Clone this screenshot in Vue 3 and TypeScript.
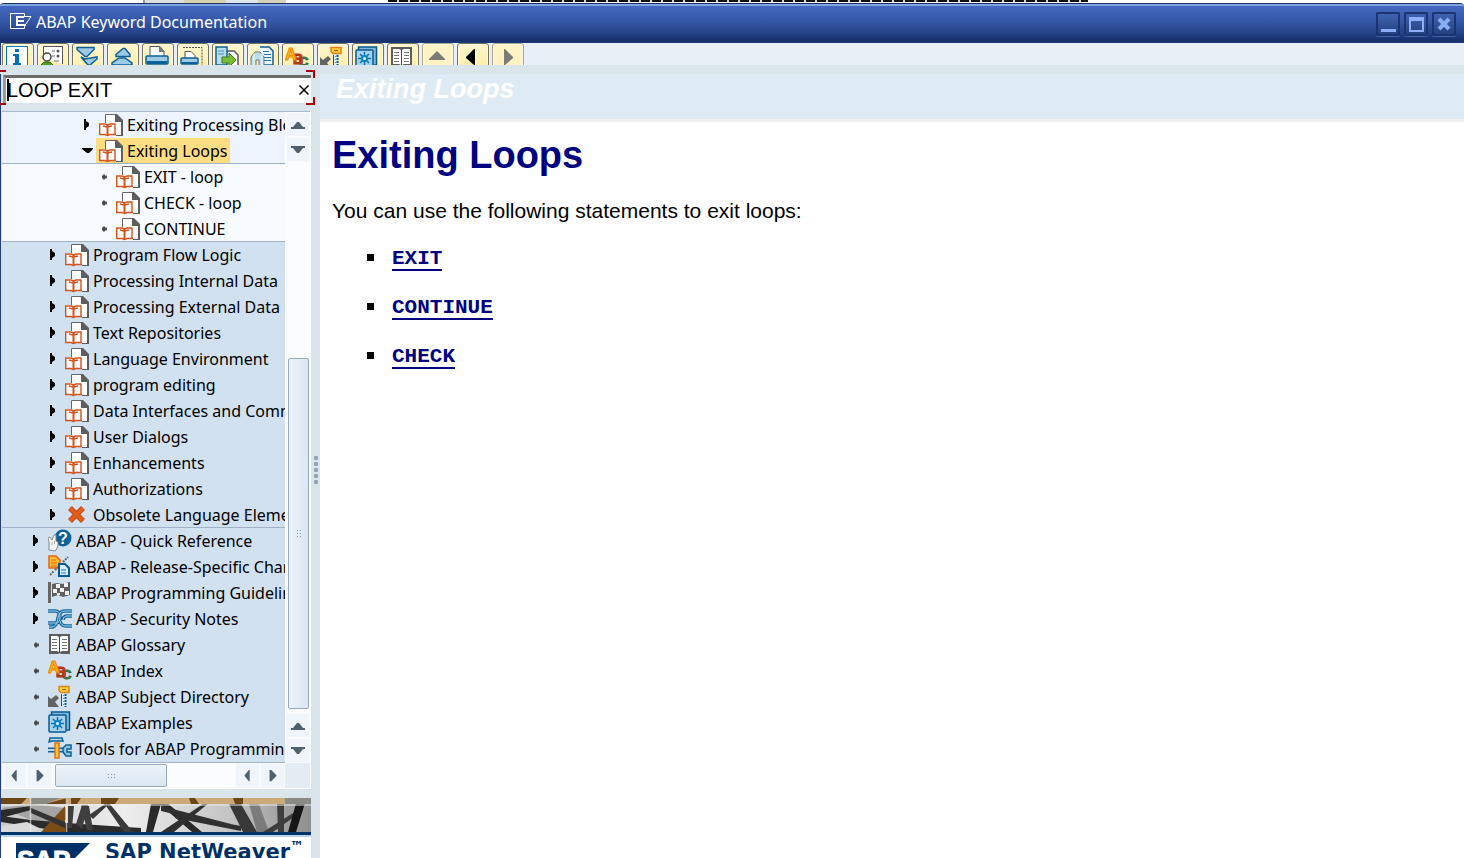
<script setup lang="ts">
import { ref } from 'vue'

interface TreeNode {
  label: string
  icon: string
  level: number
  state: 'closed' | 'open' | 'leaf'
  tone?: 'pale' | 'light'
  ruled?: boolean
  selected?: boolean
}

interface Tool {
  name: string
  icon: string
  disabled?: boolean
}

const query = ref('LOOP EXIT')

const tools: Tool[] = [
  { name: 'Information', icon: 'info' },
  { name: 'Author', icon: 'person' },
  { name: 'Expand', icon: 'expand' },
  { name: 'Collapse', icon: 'collapse' },
  { name: 'Print', icon: 'print' },
  { name: 'Print selection', icon: 'print-sel' },
  { name: 'Export', icon: 'export' },
  { name: 'Find in documents', icon: 'find' },
  { name: 'ABAP Index', icon: 'abc' },
  { name: 'Subject Directory', icon: 'key' },
  { name: 'Examples', icon: 'gear' },
  { name: 'Glossary', icon: 'book' },
  { name: 'Up', icon: 'up', disabled: true },
  { name: 'Back', icon: 'back' },
  { name: 'Forward', icon: 'forward', disabled: true },
]

const nodes: TreeNode[] = [
  { label: 'Exiting Processing Blocks', icon: 'doc', level: 3, state: 'closed', tone: 'light' },
  { label: 'Exiting Loops', icon: 'doc', level: 3, state: 'open', tone: 'light', ruled: true, selected: true },
  { label: 'EXIT - loop', icon: 'doc', level: 4, state: 'leaf', tone: 'pale' },
  { label: 'CHECK - loop', icon: 'doc', level: 4, state: 'leaf', tone: 'pale' },
  { label: 'CONTINUE', icon: 'doc', level: 4, state: 'leaf', tone: 'pale', ruled: true },
  { label: 'Program Flow Logic', icon: 'doc', level: 1, state: 'closed' },
  { label: 'Processing Internal Data', icon: 'doc', level: 1, state: 'closed' },
  { label: 'Processing External Data', icon: 'doc', level: 1, state: 'closed' },
  { label: 'Text Repositories', icon: 'doc', level: 1, state: 'closed' },
  { label: 'Language Environment', icon: 'doc', level: 1, state: 'closed' },
  { label: 'program editing', icon: 'doc', level: 1, state: 'closed' },
  { label: 'Data Interfaces and Communication', icon: 'doc', level: 1, state: 'closed' },
  { label: 'User Dialogs', icon: 'doc', level: 1, state: 'closed' },
  { label: 'Enhancements', icon: 'doc', level: 1, state: 'closed' },
  { label: 'Authorizations', icon: 'doc', level: 1, state: 'closed' },
  { label: 'Obsolete Language Elements', icon: 'cross', level: 1, state: 'closed', ruled: true },
  { label: 'ABAP - Quick Reference', icon: 'help', level: 0, state: 'closed' },
  { label: 'ABAP - Release-Specific Changes', icon: 'release', level: 0, state: 'closed' },
  { label: 'ABAP Programming Guidelines', icon: 'flag', level: 0, state: 'closed' },
  { label: 'ABAP - Security Notes', icon: 'chain', level: 0, state: 'closed' },
  { label: 'ABAP Glossary', icon: 'book', level: 0, state: 'leaf' },
  { label: 'ABAP Index', icon: 'abc', level: 0, state: 'leaf' },
  { label: 'ABAP Subject Directory', icon: 'key', level: 0, state: 'leaf' },
  { label: 'ABAP Examples', icon: 'gear', level: 0, state: 'leaf' },
  { label: 'Tools for ABAP Programming', icon: 'tools', level: 0, state: 'leaf' },
]

const links: string[] = ['EXIT', 'CONTINUE', 'CHECK']
</script>

<template>
  <div class="desktop">
    <svg class="sprite" width="0" height="0" aria-hidden="true">
      <symbol id="i-doc" viewBox="0 0 24 24">
        <path d="M6 1h11l6 7v14H6z" fill="#fff" />
        <path d="M6.500 10V1.500H16" fill="none" stroke="#666" />
        <path d="M16 1h2l6 6v16h-7v-1h5V9h-6z" fill="#5e5e5e" />
        <path d="M0 10h16v12H0z" fill="#fff" />
        <path d="M.7 21V11h5.300l2.500 1 2.500-1h5v10M0 21.500h6l2.500 1 2.500-1h6" fill="none" stroke="#d4531a" stroke-width="1.400" />
        <path d="M8.500 11.500v10.500" stroke="#d4531a" stroke-width="2" />
        <path d="M4 13l4 1 5-1" fill="none" stroke="#d4531a" stroke-width="1.400" />
      </symbol>
      <symbol id="i-cross" viewBox="0 0 24 24">
        <path d="M5 5l13 13M18 5L5 18" stroke="#c8440f" stroke-width="5.500" />
        <path d="M5 5l13 13M18 5L5 18" stroke="#e35d1b" stroke-width="3.500" />
      </symbol>
      <symbol id="i-help" viewBox="0 0 24 24">
        <circle cx="15" cy="9" r="8.500" fill="#0d6197" />
      </symbol>
      <symbol id="i-hand" viewBox="0 0 24 24">
        <path d="M1 21v-8l-1-4 2-1 2 3 2-5 2 0 0 6 2 1v4l-2 4-1 1z" fill="#f4f4f4" stroke="#888" />
        <path d="M4 13v3M6.500 12v3" stroke="#aaa" />
      </symbol>
      <symbol id="i-release" viewBox="0 0 24 24">
        <path d="M1 1h7l4 4v8H1z" fill="#fdbb30" stroke="#e0641c" stroke-width="1.500" />
        <path d="M3 5h5M3 8h6M3 11h6" stroke="#e0641c" />
        <path d="M2 20l4-4M7 15l3-3M15 7l5-5" stroke="#666" stroke-width="2" stroke-dasharray="2 1" />
        <path d="M11 9h6l4 4v8H11z" fill="#d5ebf7" stroke="#075a90" stroke-width="2" />
        <path d="M13 15h5M13 18h5" stroke="#1b76ad" />
      </symbol>
      <symbol id="i-flag" viewBox="0 0 24 24">
        <path d="M0 1h3v21H0z" fill="#666" />
        <path d="M4 3l5-1 5 1 8-2v13l-7 2-5-2-6 2z" fill="#5f5f5f" />
        <path d="M8 3h4v4H8zM16 2h4v4h-4zM5 8h4v4H5zM12 7h4v4h-4zM9 12h3v2H9zM17 10h4v4h-4z" fill="#f2f2f2" />
      </symbol>
      <symbol id="i-chain" viewBox="0 0 24 24">
        <path d="M0 4h7q5 0 5 6t-4 6H0M24 4h-7q-6 0-7 7t-5 9H1M24 19h-6q-5 0-6-5M24 9h-6q-3 1-3 4" fill="none" stroke="#146a9f" stroke-width="3.500" />
        <path d="M0 4h7q5 0 5 6t-4 6H0M24 4h-7q-6 0-7 7t-5 9H1M24 19h-6q-5 0-6-5M24 9h-6q-3 1-3 4" fill="none" stroke="#a6cfe8" />
      </symbol>
      <symbol id="i-book" viewBox="0 0 24 24">
        <path d="M1 1h21v20h-9l-1.500-1L10 21H1z" fill="#5d5d5d" />
        <path d="M3 3h6l2 1v15l-2-1H3zM12 4l2-1h6v15h-6l-2 1z" fill="#fff" />
        <path d="M4 6.500h5M4 9.500h5M4 12.500h5M4 15.500h5M14 6.500h5M14 9.500h5M14 12.500h5M14 15.500h5" stroke="#777" />
        <path d="M11.500 4v16" stroke="#444" />
      </symbol>
      <symbol id="i-key" viewBox="0 0 24 24">
        <path d="M0 11l3 3 5-4 3 3-4 4 4 5H0z" fill="#636363" />
        <path d="M13 8h5v14h-3l-2-2z" fill="#d9eefa" />
        <path d="M13.500 9v12" stroke="#075a90" />
        <path d="M17.500 9v13" stroke="#075a90" stroke-width="2" stroke-dasharray="2 1" />
        <path d="M15.500 10v11" stroke="#4d94bf" stroke-dasharray="1 2" />
        <path d="M11 1.500h10v6h-8l-2-2z" fill="#ffd02f" stroke="#e2801b" stroke-width="1.500" />
        <path d="M14 4.500h4" stroke="#8b5a16" />
      </symbol>
      <symbol id="i-gear" viewBox="0 0 24 24">
        <path d="M3.500 4V1h18v18h-3" fill="#82b8d9" stroke="#075a90" stroke-width="1.500" />
        <rect x="1" y="4" width="17" height="17" rx="1" fill="#a8d2eb" stroke="#075a90" stroke-width="1.500" />
        <path d="M9.500 6v13M3 12.500h13M5 8l9 9M14 8l-9 9" stroke="#0b73b3" stroke-width="1.500" />
        <circle cx="9.500" cy="12.500" r="3.500" fill="#0b82c4" />
        <circle cx="9.500" cy="12.500" r="1.500" fill="#e7f6ff" />
      </symbol>
      <symbol id="i-tools" viewBox="0 0 24 24">
        <path d="M0 13h16" stroke="#0d6299" stroke-width="5" />
        <path d="M0 13h16" stroke="#b4d9ed" stroke-width="2" />
        <path d="M23 8h-5l-3 3v4l3 4h5v-4h-4v-3h4z" fill="#8fc2df" stroke="#0d6299" stroke-width="1.500" />
        <path d="M2 1h12l1 3H4l-3 1z" fill="#b4d9ed" stroke="#0d6299" stroke-width="1.500" />
        <path d="M7 6h4v15H7z" fill="#ffc62a" stroke="#e2701b" stroke-width="1.500" />
      </symbol>
      <symbol id="i-info" viewBox="0 0 24 24">
        <rect x="1.500" y=".5" width="21" height="21" fill="#fff" stroke="#0077bb" />
        <path d="M10 3h4v3h-4zM8 8h6v9h2v2H8v-2h2v-7H8z" fill="#0070b3" />
      </symbol>
      <symbol id="i-person" viewBox="0 0 24 24">
        <path d="M3.500 12V.5h19V18" fill="#fff" stroke="#555" />
        <path d="M12 5h3M12 10h3M14 15h5" stroke="#666" />
        <circle cx="18" cy="5" r="1.500" fill="#555" /><circle cx="18" cy="10" r="1.500" fill="#555" />
        <circle cx="7" cy="11" r="4" fill="#fff" stroke="#444" stroke-width="1.500" />
        <path d="M1 22v-3l3-3h6l3 3v3z" fill="#51a02a" stroke="#38631f" />
      </symbol>
      <symbol id="i-expand" viewBox="0 0 24 24">
        <path d="M2 1.500h17v2l-7 7h-2l-8-7z" fill="#9cc9e4" stroke="#0c6098" stroke-width="1.500" />
        <path d="M6 11l4 2 12-2v2l-7 6h-2z" fill="#9cc9e4" stroke="#0c6098" stroke-width="1.500" />
      </symbol>
      <symbol id="i-collapse" viewBox="0 0 24 24">
        <path d="M6 10.500h14v-2l-5-6h-2l-7 6z" fill="#9cc9e4" stroke="#0c6098" stroke-width="1.500" />
        <path d="M2 19h20v-2l-7-5h-6l-7 5z" fill="#9cc9e4" stroke="#0c6098" stroke-width="1.500" />
      </symbol>
      <symbol id="i-print" viewBox="0 0 24 24">
        <path d="M5 11V.5h10l4 5V11" fill="#fff" stroke="#555" />
        <path d="M14 0v6h6z" fill="#777" />
        <rect x="1" y="10" width="22" height="8" rx="1" fill="#9cc9e4" stroke="#0c6098" stroke-width="1.500" />
        <path d="M2 15h20v3H2z" fill="#0c6098" />
      </symbol>
      <symbol id="i-print-sel" viewBox="0 0 24 24">
        <path d="M3 1.500h19V19" fill="none" stroke="#555" stroke-dasharray="2 1" />
        <path d="M5 12V5.500h6l4 4v3" fill="#fff" stroke="#555" />
        <rect x="1" y="12" width="17" height="6" rx="1" fill="#9cc9e4" stroke="#0c6098" stroke-width="1.500" />
        <path d="M2 16h15v2H2z" fill="#0c6098" />
      </symbol>
      <symbol id="i-export" viewBox="0 0 24 24">
        <path d="M12 5h7l4 4v13h-9" fill="#fff" stroke="#555" stroke-width="1.500" />
        <path d="M1 1h11v18H1z" fill="#b9dcee" stroke="#0c6098" stroke-width="1.500" />
        <path d="M3 5h6M3 8h6" stroke="#4c8fb9" />
        <path d="M7 11h7V7l7 7-7 7v-4H7z" fill="#79bd32" stroke="#3e7b1c" />
      </symbol>
      <symbol id="i-find" viewBox="0 0 24 24">
        <path d="M10 1h9l4 4v14H10" fill="#e9f5fb" stroke="#0c6098" stroke-width="1.500" />
        <path d="M13 5.500h6M14 8.500h7M14 11.500h7M14 14.500h7" stroke="#1d79ae" />
        <path d="M1 20v-9l4-5 5 0 4 5v9H9v-6H6v6z" fill="#b9dcee" stroke="#777" />
        <path d="M4 8v11M12 8v11" stroke="#e9eef1" stroke-width="1.500" />
      </symbol>
      <symbol id="i-up" viewBox="0 0 24 24"><path d="M4 14v-1l8-8 8 8v1z" fill="#7c7b75" /></symbol>
      <symbol id="i-back" viewBox="0 0 24 24"><path d="M15 3v16h-1L6 12v-1l8-8z" fill="#000" /></symbol>
      <symbol id="i-forward" viewBox="0 0 24 24"><path d="M9 3v16h1l8-7v-1l-8-8z" fill="#7c7b75" /></symbol>
    </svg>

    <div class="behind" aria-hidden="true"></div>

    <header class="titlebar">
      <svg class="title-icon" viewBox="0 0 22 18" aria-hidden="true">
        <path d="M14.500 3V.5H.5v15h14V13" fill="none" stroke="#fff" />
        <path d="M14 4H7v8h9M8 8h6" fill="none" stroke="#fff" stroke-width="2" />
        <path d="M12 3.500h9L16 11" fill="none" stroke="#fff" />
      </svg>
      <span class="title">ABAP Keyword Documentation</span>
      <div class="window-buttons">
        <button type="button" aria-label="Minimize">
          <svg viewBox="0 0 24 24"><path d="M5 17h15v3H5z" fill="#8cadf8" /></svg>
        </button>
        <button type="button" aria-label="Maximize">
          <svg viewBox="0 0 24 24"><path d="M5 5h15v15H5zM7 9v9h11V9z" fill="#8cadf8" fill-rule="evenodd" /></svg>
        </button>
        <button type="button" aria-label="Close">
          <svg viewBox="0 0 24 24"><path d="M7 7l10 10M17 7L7 17" stroke="#8cadf8" stroke-width="4" /></svg>
        </button>
      </div>
    </header>

    <nav class="toolbar" aria-label="Tools">
      <button v-for="tool in tools" :key="tool.name" type="button" :aria-label="tool.name" :disabled="tool.disabled">
        <svg v-if="tool.icon === 'abc'" class="icon abc" viewBox="0 0 24 24" aria-hidden="true">
          <text x="14" y="20" class="c">C</text>
          <text x="8" y="18" class="b">B</text>
          <text x="0" y="14" class="a">A</text>
        </svg>
        <svg v-else class="icon"><use :href="'#i-' + tool.icon" /></svg>
      </button>
    </nav>

    <div class="body">
      <aside class="sidebar">
        <div class="search">
          <input v-model="query" type="text" aria-label="Search term" />
          <button class="clear" type="button" aria-label="Clear">
            <svg viewBox="0 0 10 10"><path d="M.5.5l9 9M9.500.5l-9 9" stroke="#000" stroke-width="1.500" /></svg>
          </button>
          <span class="caret"></span>
          <span class="bracket left"></span>
          <span class="bracket top"></span>
          <span class="bracket bottom"></span>
        </div>

        <div class="tree-panel">
          <div class="tree-view">
            <ul class="tree">
              <li v-for="node in nodes" :key="node.label" class="row" :class="[node.tone, { ruled: node.ruled }]" :style="{ paddingLeft: 29 + node.level * 17 + 'px' }">
                <svg class="marker" viewBox="0 0 14 14" aria-hidden="true">
                  <path v-if="node.state === 'closed'" d="M2 1h2v2l3 2v3l-3 2v2H2z" fill="#000" />
                  <path v-else-if="node.state === 'open'" d="M0 4h11v1L7 9H5L0 5z" fill="#000" />
                  <path v-else d="M5 4.500v5M3 7h5" stroke="#222" stroke-width="1.500" />
                  <path v-if="node.state === 'leaf'" d="M3 5h5v4H3z" fill="#555" fill-opacity=".5" />
                </svg>
                <button type="button" class="node" :class="{ selected: node.selected }">
                  <svg v-if="node.icon === 'abc'" class="icon abc" viewBox="0 0 24 24" aria-hidden="true">
                    <text x="14" y="20" class="c">C</text>
                    <text x="8" y="18" class="b">B</text>
                    <text x="0" y="14" class="a">A</text>
                  </svg>
                  <svg v-else-if="node.icon === 'help'" class="icon" viewBox="0 0 24 24" aria-hidden="true">
                    <use href="#i-help" />
                    <text x="15" y="15" class="question">?</text>
                    <use href="#i-hand" />
                  </svg>
                  <svg v-else class="icon"><use :href="'#i-' + node.icon" /></svg>
                  <span>{{ node.label }}</span>
                </button>
              </li>
            </ul>
            <div class="vscroll">
              <button type="button" aria-label="Scroll up"><svg viewBox="0 0 14 8"><path d="M0 8V6h2l4-5h2l4 5h2v2z" fill="#50606e" /></svg></button>
              <button type="button" aria-label="Scroll down"><svg viewBox="0 0 14 8"><path d="M0 0v2h2l4 5h2l4-5h2V0z" fill="#50606e" /></svg></button>
              <div class="vtrack"><div class="vthumb"><i class="grip"></i></div></div>
              <button type="button" aria-label="Page up"><svg viewBox="0 0 14 8"><path d="M0 8V6h2l4-5h2l4 5h2v2z" fill="#50606e" /></svg></button>
              <button type="button" aria-label="Page down"><svg viewBox="0 0 14 8"><path d="M0 0v2h2l4 5h2l4-5h2V0z" fill="#50606e" /></svg></button>
            </div>
          </div>
          <div class="hscroll">
            <button type="button" aria-label="Scroll left"><svg viewBox="0 0 14 14"><path d="M9 0v13H8L3 7V6l5-6z" fill="#50606e" /></svg></button>
            <button type="button" aria-label="Scroll right"><svg viewBox="0 0 14 14"><path d="M3 0v13h2l6-6V6L5 0z" fill="#50606e" /></svg></button>
            <div class="htrack"><div class="hthumb"><i class="grip wide"></i></div></div>
            <button type="button" aria-label="Page left"><svg viewBox="0 0 14 14"><path d="M9 0v13H8L3 7V6l5-6z" fill="#50606e" /></svg></button>
            <button type="button" aria-label="Page right"><svg viewBox="0 0 14 14"><path d="M3 0v13h2l6-6V6L5 0z" fill="#50606e" /></svg></button>
            <div class="corner"></div>
          </div>
        </div>

        <div class="brand">
          <svg class="photo" viewBox="0 0 310 34" preserveAspectRatio="none" aria-hidden="true">
            <defs>
              <linearGradient id="sky" x1="0" x2="1" y1="0" y2="0">
                <stop offset="0" stop-color="#c8c8c8" /><stop offset=".4" stop-color="#eeeeee" />
                <stop offset=".75" stop-color="#c2c2c2" /><stop offset="1" stop-color="#8e8e8e" />
              </linearGradient>
            </defs>
            <rect width="310" height="34" fill="url(#sky)" />
            <path d="M0 10l30-4 35 4v12L40 26z" fill="#a5a5a5" />
            <path d="M0 18l30 4 50 4 60 4v4H64L0 24zM0 12l30-4v4L0 20z" fill="#2b2b2b" />
            <path d="M0 34l0-6 26-4 12 6-6 4z" fill="#d9d9d9" />
            <path d="M64 8v26H40z" fill="#7b4d14" />
            <path d="M30 10l34 14v6L30 15z" fill="#333" />
            <path d="M67 8h6l-2 22h-4zM75 26l6-19h6l-6 24zM80 8h8l4 24h-6z" fill="#3f3f3f" />
            <path d="M88 17L104 6h4L92 21zM108 5l24 29h-9L105 8z" fill="#3a3a3a" />
            <path d="M150 6h10l-8 28h-7zM156 4h9l36 30h-10z" fill="#292929" />
            <path d="M160 8l70 18v4l-70-17zM160 34L205 4h4l-36 30zM176 16l64 12v5l-66-13z" fill="#303030" />
            <path d="M228 6h12l16 28h-14z" fill="#383838" />
            <path d="M248 6h10l10 28h-12z" fill="#7b7b7b" />
            <path d="M262 34l38-24v4l-28 20zM276 4h7v30h-6z" fill="#3d3d3d" />
            <path d="M296 2h9l-10 32h-8z" fill="#161616" />
            <path d="M0 0h310v6H0z" fill="#cbaa78" />
            <path d="M0 0h26L20 6H0zM44 6L66 0v6zM70 0h10l-4 6h-6zM100 0h18l-4 6h-14zM188 0h6l4 6h-8zM232 0h10v6h-8z" fill="#6d4617" />
            <path d="M30 0h30L44 6H30zM284 0h26v6h-26z" fill="#8b8b86" />
            <path d="M0 7h310M29.500 0v34M65.500 0v34" stroke="#eee" stroke-opacity=".65" stroke-width="1.500" />
          </svg>
          <div class="logo">
            <svg class="sap" viewBox="0 0 74 38" aria-hidden="true">
              <path d="M0 0h74L36 38H0z" fill="#003068" />
              <text x="1" y="26" class="sap-text">SAP</text>
            </svg>
            <strong>SAP NetWeaver<sup>™</sup></strong>
          </div>
        </div>
        <div class="splitter" aria-hidden="true"><i v-for="n in 5" :key="n"></i></div>
      </aside>

      <main class="content">
        <div class="banner">Exiting Loops</div>
        <article>
          <h1>Exiting Loops</h1>
          <p>You can use the following statements to exit loops:</p>
          <ul>
            <li v-for="link in links" :key="link"><a :href="'#' + link">{{ link }}</a></li>
          </ul>
        </article>
      </main>
    </div>
  </div>
</template>

<style>
body {
  margin: 0;
  overflow: hidden;
}
</style>

<style scoped>
* {
  box-sizing: border-box;
}
.desktop {
  height: 100vh;
  display: flex;
  flex-direction: column;
  overflow: hidden;
  background: #fff;
  font-family: 'Noto Sans', 'Open Sans', sans-serif;
  font-size: 16px;
  color: #000;
}
.sprite {
  position: absolute;
}
button {
  margin: 0;
  padding: 0;
  border: 0;
  background: none;
  font: inherit;
  color: inherit;
}
.icon {
  flex: none;
  width: 24px;
  height: 24px;
}
.abc text {
  font: bold 16px 'Liberation Sans', Arial, sans-serif;
  fill: #ffc21f;
  stroke: #ef8500;
}
.abc .b {
  font-size: 14px;
  fill: #d54c20;
  stroke: #a92e13;
}
.abc .c {
  font-size: 13px;
  fill: #4e9a4e;
  stroke: #35683e;
}
.question {
  font: bold 16px 'Liberation Sans', Arial, sans-serif;
  fill: #fff;
  text-anchor: middle;
}
.sap-text {
  font: bold 26px 'Liberation Sans', Arial, sans-serif;
  fill: #fff;
  stroke: #fff;
}
.behind {
  flex: none;
  height: 3px;
  background:
    repeating-linear-gradient(90deg, #111 0 9px, #d8d8d8 9px 11px) 388px 0 / 700px 2px no-repeat,
    linear-gradient(90deg, #fff 143px, #999 143px 145px, #dcdfe2 145px 184px, #d8d2ae 184px 226px, #dfe6f0 226px 258px, #d9d2b8 258px 286px, #fff 286px);
}
.titlebar {
  flex: none;
  display: flex;
  align-items: center;
  height: 40px;
  padding: 0 8px 4px 10px;
  border-top: 1px solid #1d3468;
  border-radius: 4px 4px 0 0;
  background: linear-gradient(#7fa3e0 0 2px, #4569c0 2px, #3558a9 16px, #27458d 28px, #17306d 36px, #1b3676);
  color: #fff;
}
.title-icon {
  width: 22px;
  height: 18px;
}
.title {
  flex: 1;
  margin-left: 4px;
  line-height: 24px;
}
.window-buttons {
  display: flex;
  gap: 4px;
  padding-top: 4px;
}
.window-buttons button {
  width: 24px;
  height: 24px;
  border: 2px solid #1a3472;
  border-radius: 2px;
  background: linear-gradient(#3f62b2, #23427f);
  box-shadow: 0 1px 0 #4063a6;
}
.window-buttons svg {
  display: block;
  width: 24px;
  height: 24px;
  margin: -2px;
}
.toolbar {
  flex: none;
  display: flex;
  gap: 3px;
  height: 22px;
  padding-left: 1px;
  overflow: hidden;
  background: #e9eff7;
  border-left: 1px solid #24407f;
}
.toolbar button {
  flex: none;
  display: flex;
  width: 32px;
  height: 30px;
  padding: 2px 3px 0 2px;
  border: 1px solid #77735f;
  border-radius: 3px;
  background: linear-gradient(#fff6cf, #ffeca2);
  box-shadow: inset 0 0 0 1px #fff9df;
}
.toolbar button:disabled {
  border-color: #aaa692;
  background: #fff3c6;
}
.body {
  flex: 1;
  display: flex;
  min-height: 0;
  border-top: 9px solid #dae5eb;
}
.sidebar {
  position: relative;
  flex: none;
  width: 320px;
  padding-right: 9px;
  border-left: 1px solid #24407f;
  background: #dae5eb;
}
.search {
  position: relative;
  height: 37px;
  padding: 1px 0 0 2px;
}
.search input {
  display: block;
  width: 308px;
  height: 28px;
  padding: 0 24px 0 1px;
  border: solid #777;
  border-width: 3px 0 0 3px;
  border-top-color: #6b6b6b;
  border-left-color: #999;
  border-radius: 0;
  outline: 0;
  background: #fff;
  font: 20px/24px 'Liberation Sans', Arial, sans-serif;
}
.clear {
  position: absolute;
  top: 11px;
  right: 2px;
  width: 10px;
  height: 10px;
}
.clear svg {
  display: block;
}
.caret {
  position: absolute;
  top: 5px;
  left: 6px;
  width: 2px;
  height: 22px;
  background: #000;
}
.bracket {
  position: absolute;
  width: 9px;
  height: 8px;
  border: 0 solid #a8000c;
}
.bracket.left {
  top: -4px;
  left: -1px;
  width: 6px;
  height: 35px;
  border-width: 2px 0;
}
.bracket.top {
  top: -4px;
  right: -4px;
  border-width: 2px 2px 0 0;
}
.bracket.bottom {
  top: 23px;
  right: -4px;
  border-width: 0 2px 2px 0;
}
.tree-panel {
  margin-left: 1px;
  border: solid #fff;
  border-width: 0 1px 1px 0;
}
.tree-view {
  display: flex;
  border-top: 1px solid #a9bbcb;
  background: #fbfcfd;
}
.tree {
  flex: 1;
  min-width: 0;
  margin: 0;
  padding: 0;
  overflow: hidden;
  list-style: none;
  border-bottom: 1px solid #9fb2c8;
}
.row {
  display: flex;
  align-items: center;
  height: 26px;
  background: #d2e1f0;
}
.row.light {
  background: #edf4fd;
}
.row.pale {
  background: #f7fbff;
}
.row.ruled {
  border-bottom: 1px solid #9fb2c8;
}
.marker {
  flex: none;
  width: 14px;
  height: 14px;
}
.node {
  flex: none;
  display: flex;
  align-items: center;
  gap: 4px;
  height: 25px;
  padding: 0 2px 0 3px;
  line-height: 24px;
  white-space: nowrap;
}
.node.selected {
  background: #fddd82;
}
.vscroll,
.hscroll {
  display: flex;
}
.vscroll {
  flex: none;
  flex-direction: column;
  width: 25px;
  padding: 0 1px;
}
.vscroll button,
.hscroll button {
  flex: none;
  display: flex;
  align-items: center;
  justify-content: center;
  width: 24px;
  height: 25px;
  background: #f0f5fb;
  border: 1px solid #f8fafc;
}
.vscroll svg {
  width: 14px;
  height: 8px;
}
.hscroll svg {
  width: 12px;
  height: 12px;
}
.vtrack {
  flex: 1;
  display: flex;
  padding: 196px 0 4px 2px;
}
.vthumb,
.hthumb {
  flex: 1;
  display: flex;
  align-items: center;
  justify-content: center;
  border: 1px solid #97aabd;
  border-radius: 2px;
}
.vthumb {
  background: linear-gradient(90deg, #edf3f9, #dbe6f1);
}
.hthumb {
  flex: none;
  width: 112px;
  background: linear-gradient(#edf3f9, #dbe6f1);
}
.grip {
  width: 6px;
  height: 9px;
  background: radial-gradient(circle, #8796a5 1px, transparent 1px) 0 0 / 3px 3px;
}
.grip.wide {
  width: 9px;
  height: 6px;
}
.hscroll {
  height: 25px;
  background: #fbfcfd;
}
.hscroll button {
  width: 25px;
}
.htrack {
  flex: 1;
  display: flex;
  padding: 1px 2px 1px 3px;
}
.corner {
  width: 25px;
  background: #e3ebf3;
}
.brand {
  margin-top: 9px;
}
.photo {
  display: block;
  width: 100%;
  height: 34px;
}
.logo {
  display: flex;
  gap: 15px;
  height: 60px;
  padding: 8px 0 0 15px;
  border-top: 3px solid #003366;
  background: #fff;
  box-shadow: inset 0 2px 0 #b8d3ec;
}
.sap {
  flex: none;
  width: 74px;
  height: 38px;
}
.logo strong {
  color: #003068;
  font: 900 21px/18px 'DejaVu Sans', sans-serif;
  white-space: nowrap;
}
.logo sup {
  font-size: 14px;
  line-height: 1px;
}
.splitter {
  position: absolute;
  top: 382px;
  right: 2px;
  display: grid;
  gap: 2px;
}
.splitter i {
  width: 4px;
  height: 4px;
  border-radius: 1px;
  background: #95a4b4;
}
.content {
  flex: 1;
  min-width: 0;
  font-family: 'Liberation Sans', Arial, sans-serif;
}
.banner {
  height: 48px;
  padding-left: 16px;
  border-bottom: 3px solid #f0f0f0;
  background: #deebf4;
  color: #fff;
  font-size: 27px;
  font-style: italic;
  font-weight: bold;
  line-height: 30px;
}
article {
  padding: 11px 12px;
}
h1 {
  margin: 0;
  color: #000080;
  font-size: 38px;
  line-height: 44px;
}
p {
  margin: 22px 0 24px;
  font-size: 21px;
  line-height: 24px;
}
article ul {
  margin: 0;
  padding: 0 0 0 35px;
  list-style: none;
}
article li {
  display: flex;
  gap: 18px;
  height: 24px;
  margin-bottom: 25px;
}
article li::before {
  content: '';
  width: 7px;
  height: 7px;
  margin-top: 7px;
  background: #000;
}
article a {
  height: 24px;
  border-bottom: 2px solid #000080;
  color: #000080;
  font: bold 21px/24px 'Liberation Mono', 'Courier New', monospace;
  text-decoration: none;
}
</style>
